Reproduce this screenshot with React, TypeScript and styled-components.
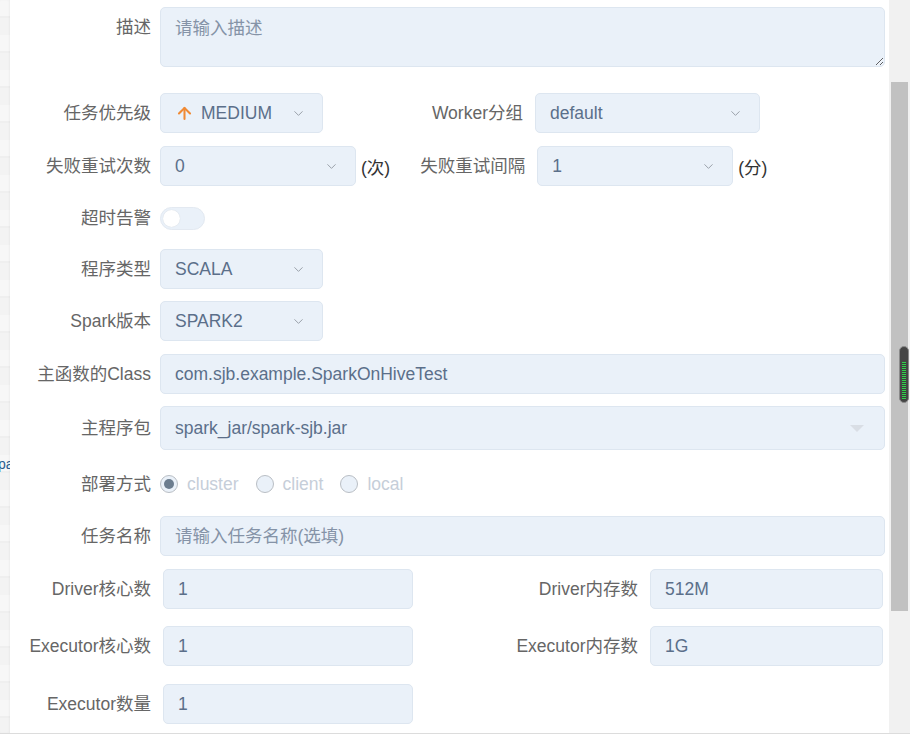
import React from 'react';
import styled, { createGlobalStyle } from 'styled-components';
import { ArrowUp, ChevronDown } from 'lucide-react';

const GlobalStyle = createGlobalStyle`
  html, body {
    margin: 0;
    padding: 0;
    background: #fff;
  }
  body {
    font-family: "Liberation Sans", "Noto Sans CJK SC", sans-serif;
  }
  * {
    box-sizing: border-box;
  }
`;

const Frame = styled.div`
  width: 910px;
  height: 743px;
  display: flex;
  flex-direction: column;
  overflow: hidden;
`;

const Main = styled.div`
  height: 733px;
  display: flex;
`;

const Backdrop = styled.div`
  width: 10px;
  overflow: hidden;
  background: repeating-linear-gradient(
    180deg,
    #f7f7f7 0px,
    #f7f7f7 16px,
    #efefef 16px,
    #efefef 18px,
    #f3f3f3 18px,
    #f3f3f3 35px
  );
  box-shadow: inset -1px 0 2px rgba(0, 0, 0, 0.04);
`;

const BackdropText = styled.div`
  margin-top: 456px;
  margin-left: -2px;
  font-size: 14px;
  color: #2a5d8f;
  white-space: nowrap;
`;

const Panel = styled.div`
  flex: 1;
  padding: 7px 4px 0 0;
  overflow: hidden;
  background: #fff;
`;

const Row = styled.div<{ $mb?: number; $top?: boolean; $h?: number }>`
  display: flex;
  align-items: ${(p) => (p.$top ? 'flex-start' : 'center')};
  min-height: ${(p) => p.$h ?? 40}px;
  margin-bottom: ${(p) => p.$mb ?? 0}px;
`;

const Label = styled.div<{ $w?: number; $mr?: number; $ml?: number }>`
  width: ${(p) => p.$w ?? 141}px;
  flex-shrink: 0;
  margin-left: ${(p) => p.$ml ?? 0}px;
  margin-right: ${(p) => p.$mr ?? 9}px;
  text-align: right;
  line-height: 40px;
  font-size: 17.5px;
  color: #666;
  white-space: nowrap;
`;

const FlexLabel = styled(Label)`
  flex: 1;
  width: auto;
`;

const HalfField = styled.div<{ $grow?: boolean }>`
  display: flex;
  align-items: center;
  flex: ${(p) => (p.$grow ? 1 : '0 0 auto')};
`;

const TextArea = styled.textarea`
  flex: 1;
  height: 60px;
  resize: vertical;
  padding: 8px 14px;
  border: 1px solid #dde6f0;
  border-radius: 5px;
  background: #eaf1f9;
  font-family: inherit;
  font-size: 17.5px;
  line-height: 24px;
  color: #5b6f8a;
  outline: none;
  &::placeholder {
    color: #8593a7;
  }
`;

const TextInput = styled.input<{ $w?: number; $mr?: number }>`
  ${(p) => (p.$w ? `width: ${p.$w}px; flex: 0 0 auto;` : 'flex: 1; min-width: 0;')}
  margin-right: ${(p) => p.$mr ?? 0}px;
  height: 40px;
  padding: 0 14px;
  border: 1px solid #dde6f0;
  border-radius: 5px;
  background: #eaf1f9;
  font-family: inherit;
  font-size: 17.5px;
  color: #5b6f8a;
  outline: none;
  &::placeholder {
    color: #8593a7;
  }
`;

const SelectBox = styled.div<{ $w?: number; $h?: number }>`
  ${(p) => (p.$w ? `width: ${p.$w}px; flex: 0 0 auto;` : 'flex: 1;')}
  height: ${(p) => p.$h ?? 40}px;
  display: flex;
  align-items: center;
  justify-content: space-between;
  padding: 0 14px 0 14px;
  border: 1px solid #dde6f0;
  border-radius: 5px;
  background: #eaf1f9;
  font-size: 17.5px;
  color: #5b6f8a;
`;

const SelectValue = styled.span`
  display: flex;
  align-items: center;
  gap: 7px;
`;

const Chevron = styled(ChevronDown)`
  color: #8e959e;
  margin-right: 2px;
`;

const Caret = styled.span`
  width: 0;
  height: 0;
  margin-right: 6px;
  border-left: 7px solid transparent;
  border-right: 7px solid transparent;
  border-top: 7px solid #d9dee5;
`;

const Unit = styled.span`
  margin-left: 5px;
  font-size: 17.5px;
  color: #333;
`;

const Switch = styled.div`
  width: 45px;
  height: 23px;
  border-radius: 12px;
  background: #eaf1f9;
  border: 1px solid #e3e9f1;
  display: flex;
  align-items: center;
  padding: 0 2px;
`;

const Knob = styled.span`
  width: 17px;
  height: 17px;
  border-radius: 50%;
  background: #fff;
  box-shadow: 0 0 1px rgba(0, 0, 0, 0.15);
`;

const RadioGroup = styled.div`
  display: flex;
  align-items: center;
  gap: 17px;
`;

const RadioItem = styled.label`
  display: flex;
  align-items: center;
  gap: 9px;
  font-size: 17.5px;
  color: #c6ced9;
`;

const RadioCircle = styled.span<{ $checked?: boolean }>`
  width: 18px;
  height: 18px;
  border-radius: 50%;
  border: 1px solid #b9bec4;
  background: #eaf1f9;
  display: flex;
  align-items: center;
  justify-content: center;
  &::after {
    content: '';
    display: ${(p) => (p.$checked ? 'block' : 'none')};
    width: 10px;
    height: 10px;
    border-radius: 50%;
    background: #6c7d8f;
  }
`;

const ScrollTrack = styled.div`
  position: relative;
  width: 21px;
  background: #f1f1f1;
  padding: 82px 2px 0 2px;
`;

const ScrollThumb = styled.div`
  height: 529px;
  background: #c1c1c1;
`;

const Meter = styled.div`
  position: absolute;
  left: 10px;
  top: 346px;
  width: 10px;
  height: 57px;
  border-radius: 5px;
  background: #444;
  border: 1px solid #8a8a8a;
  padding: 15px 2px 2px 2px;
`;

const MeterBars = styled.div`
  height: 100%;
  background: repeating-linear-gradient(
    180deg,
    #2fd34a 0px,
    #2fd34a 1px,
    #3c3c3c 1px,
    #3c3c3c 2px
  );
`;

const Footer = styled.div`
  height: 10px;
  border-top: 1px solid #dcdcdc;
  background: #fff;
`;

const Select = ({
  value,
  w,
  h,
  icon,
  caret,
}: {
  value: string;
  w?: number;
  h?: number;
  icon?: React.ReactNode;
  caret?: boolean;
}) => (
  <SelectBox $w={w} $h={h}>
    <SelectValue>
      {icon}
      {value}
    </SelectValue>
    {caret ? <Caret /> : <Chevron size={15} strokeWidth={1.4} />}
  </SelectBox>
);

export default function App() {
  return (
    <>
      <GlobalStyle />
      <Frame>
        <Main>
          <Backdrop>
            <BackdropText>pa</BackdropText>
          </Backdrop>
          <Panel>
            {/* 描述 */}
            <Row $top $mb={26} $h={60}>
              <Label>描述</Label>
              <TextArea placeholder="请输入描述" />
            </Row>

            {/* 优先级 / Worker */}
            <Row $mb={13}>
              <Label>任务优先级</Label>
              <Select
                value="MEDIUM"
                w={163}
                icon={<ArrowUp size={19} strokeWidth={2.6} color="#f08a34" />}
              />
              <Label $ml={59} $mr={12}>
                Worker分组
              </Label>
              <Select value="default" w={225} />
            </Row>

            {/* 重试 */}
            <Row $mb={12}>
              <Label>失败重试次数</Label>
              <Select value="0" w={196} />
              <Unit>(次)</Unit>
              <Label $w={120} $ml={15} $mr={12}>
                失败重试间隔
              </Label>
              <Select value="1" w={196} />
              <Unit>(分)</Unit>
            </Row>

            <Row $mb={11}>
              <Label>超时告警</Label>
              <Switch>
                <Knob />
              </Switch>
            </Row>

            <Row $mb={12}>
              <Label>程序类型</Label>
              <Select value="SCALA" w={163} />
            </Row>

            <Row $mb={13}>
              <Label>Spark版本</Label>
              <Select value="SPARK2" w={163} />
            </Row>

            <Row $mb={12}>
              <Label>主函数的Class</Label>
              <TextInput defaultValue="com.sjb.example.SparkOnHiveTest" />
            </Row>

            <Row $mb={14} $h={44}>
              <Label>主程序包</Label>
              <Select value="spark_jar/spark-sjb.jar" h={44} caret />
            </Row>

            <Row $mb={12}>
              <Label>部署方式</Label>
              <RadioGroup>
                <RadioItem>
                  <RadioCircle $checked />
                  cluster
                </RadioItem>
                <RadioItem>
                  <RadioCircle />
                  client
                </RadioItem>
                <RadioItem>
                  <RadioCircle />
                  local
                </RadioItem>
              </RadioGroup>
            </Row>

            <Row $mb={13}>
              <Label>任务名称</Label>
              <TextInput placeholder="请输入任务名称(选填)" />
            </Row>

            <Row $mb={17}>
              <HalfField>
                <Label $mr={12}>Driver核心数</Label>
                <TextInput $w={250} defaultValue="1" />
              </HalfField>
              <HalfField $grow>
                <FlexLabel $mr={12}>Driver内存数</FlexLabel>
                <TextInput $w={233} $mr={2} defaultValue="512M" />
              </HalfField>
            </Row>

            <Row $mb={18}>
              <HalfField>
                <Label $mr={12}>Executor核心数</Label>
                <TextInput $w={250} defaultValue="1" />
              </HalfField>
              <HalfField $grow>
                <FlexLabel $mr={12}>Executor内存数</FlexLabel>
                <TextInput $w={233} $mr={2} defaultValue="1G" />
              </HalfField>
            </Row>

            <Row>
              <HalfField>
                <Label $mr={12}>Executor数量</Label>
                <TextInput $w={250} defaultValue="1" />
              </HalfField>
            </Row>
          </Panel>
          <ScrollTrack>
            <ScrollThumb />
            <Meter>
              <MeterBars />
            </Meter>
          </ScrollTrack>
        </Main>
        <Footer />
      </Frame>
    </>
  );
}
